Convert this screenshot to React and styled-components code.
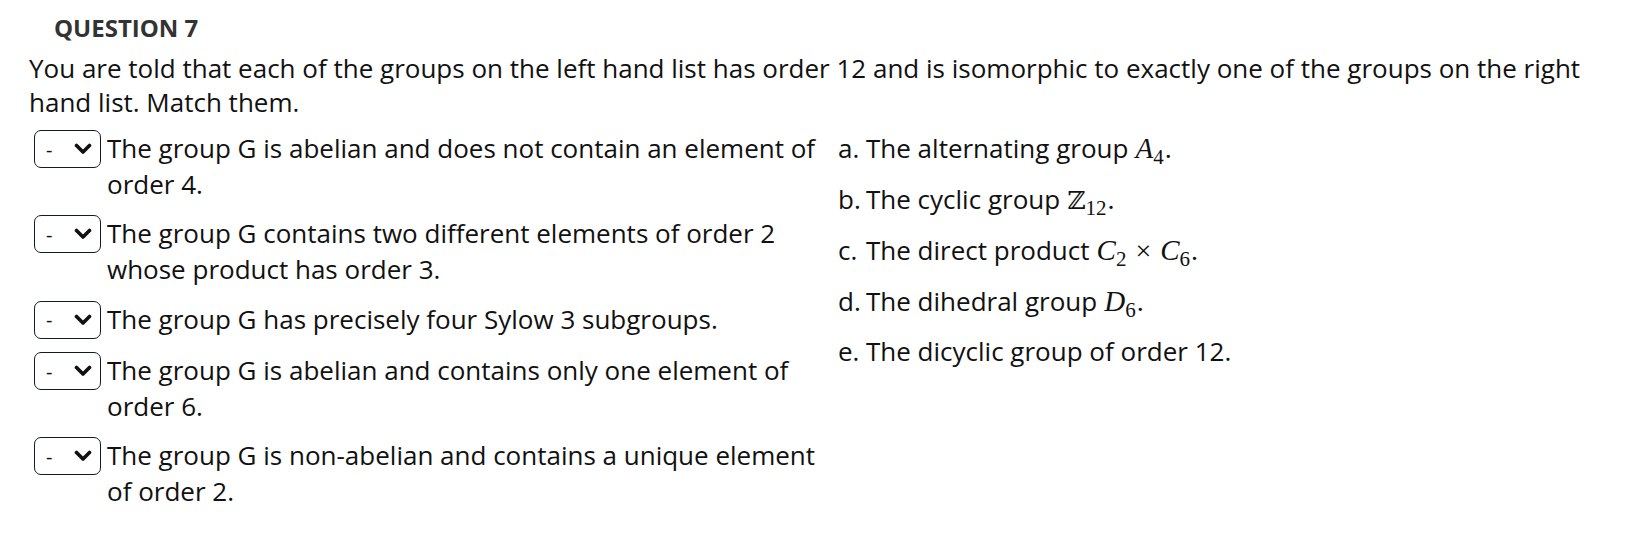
import React from 'react'
import styled, { createGlobalStyle } from 'styled-components'

const GlobalStyle = createGlobalStyle`
  body {
    margin: 0;
    background: #ffffff;
    font-family: 'Open Sans', 'Liberation Sans', sans-serif;
    color: #111111;
  }
`

const questions = [
  'The group G is abelian and does not contain an element of order 4.',
  'The group G contains two different elements of order 2 whose product has order 3.',
  'The group G has precisely four Sylow 3 subgroups.',
  'The group G is abelian and contains only one element of order 6.',
  'The group G is non-abelian and contains a unique element of order 2.',
]

const Page = styled.div`
  padding: 11px 0 0 29px;
`

const Title = styled.h2`
  margin: 0 0 7px 25px;
  font-size: 24px;
  line-height: 34px;
  font-weight: 700;
  color: #333333;
`

const Intro = styled.p`
  margin: 0 0 11px 0;
  font-size: 26px;
  line-height: 33.6px;
  max-width: 1570px;
`

const Columns = styled.div`
  display: grid;
  grid-template-columns: 804px 1fr;
  padding-left: 5px;
`

const List = styled.div`
  display: flex;
  flex-direction: column;
  gap: ${p => p.$gap}px;
`

const Row = styled.div`
  display: flex;
  align-items: flex-start;
  gap: 6px;
`

const SelectBox = styled.div`
  position: relative;
  flex: 0 0 auto;
  width: 67px;
  height: 38px;
  box-sizing: border-box;
  border: 1.8px solid #121c27;
  border-radius: 7px;
  background: #ffffff;
`

const Select = styled.select`
  appearance: none;
  width: 100%;
  height: 100%;
  border: none;
  background: transparent;
  padding: 0 0 0 11px;
  font-family: 'Open Sans', sans-serif;
  font-size: 20px;
  color: #111111;
  outline: none;
`

const Chevron = styled.svg`
  position: absolute;
  right: 8px;
  top: 12px;
  pointer-events: none;
`

const Text = styled.div`
  width: 722px;
  font-size: 26px;
  line-height: 36px;
`

const Answer = styled.div`
  display: flex;
  font-size: 26px;
  line-height: 36px;
  height: 36px;
`

const Label = styled.span`
  width: 28px;
  flex: 0 0 auto;
`

const Mi = styled.span`
  font-family: 'Liberation Serif', 'DejaVu Serif', serif;
  font-style: italic;
  font-size: 29px;
  margin-left: ${p => (p.$tight ? '0' : '7px')};
`

const Bb = styled.span`
  font-family: 'DejaVu Serif', serif;
  font-size: 25px;
  margin-left: 7px;
`

const Sub = styled.sub`
  font-family: 'Liberation Serif', 'DejaVu Serif', serif;
  font-size: 21px;
  vertical-align: -6px;
  line-height: 0;
`

const Op = styled.span`
  font-family: 'Liberation Serif', serif;
  font-size: 28px;
  margin: 0 9px;
`

const Dot = styled.span`
  font-family: 'Liberation Serif', serif;
  font-size: 28px;
  margin-left: 1px;
`

const answers = [
  { label: 'a.', text: 'The alternating group', math: <><Mi>A</Mi><Sub>4</Sub><Dot>.</Dot></> },
  { label: 'b.', text: 'The cyclic group', math: <><Bb>ℤ</Bb><Sub>12</Sub><Dot>.</Dot></> },
  {
    label: 'c.',
    text: 'The direct product',
    math: <><Mi>C</Mi><Sub>2</Sub><Op>×</Op><Mi $tight>C</Mi><Sub>6</Sub><Dot>.</Dot></>,
  },
  { label: 'd.', text: 'The dihedral group', math: <><Mi>D</Mi><Sub>6</Sub><Dot>.</Dot></> },
  { label: 'e.', text: 'The dicyclic group of order 12.', math: null },
]

const Dropdown = () => (
  <SelectBox>
    <Select defaultValue="-">
      <option value="-">-</option>
      <option value="a">a</option>
      <option value="b">b</option>
      <option value="c">c</option>
      <option value="d">d</option>
      <option value="e">e</option>
    </Select>
    <Chevron width="18" height="12" viewBox="0 0 18 12">
      <path d="M2.5 2.5 L9 9 L15.5 2.5" fill="none" stroke="#111" strokeWidth="3.6" strokeLinecap="round" strokeLinejoin="round" />
    </Chevron>
  </SelectBox>
)

const App = () => (
  <Page>
    <GlobalStyle />
    <Title>QUESTION 7</Title>
    <Intro>
      You are told that each of the groups on the left hand list has order 12 and is isomorphic to exactly one of the groups on the right hand list. Match them.
    </Intro>
    <Columns>
      <List $gap={13.3}>
        {questions.map(q => (
          <Row key={q}>
            <Dropdown />
            <Text>{q}</Text>
          </Row>
        ))}
      </List>
      <List $gap={14.8}>
        {answers.map(a => (
          <Answer key={a.label}>
            <Label>{a.label}</Label>
            <span>{a.text}{a.math}</span>
          </Answer>
        ))}
      </List>
    </Columns>
  </Page>
)

export default App
